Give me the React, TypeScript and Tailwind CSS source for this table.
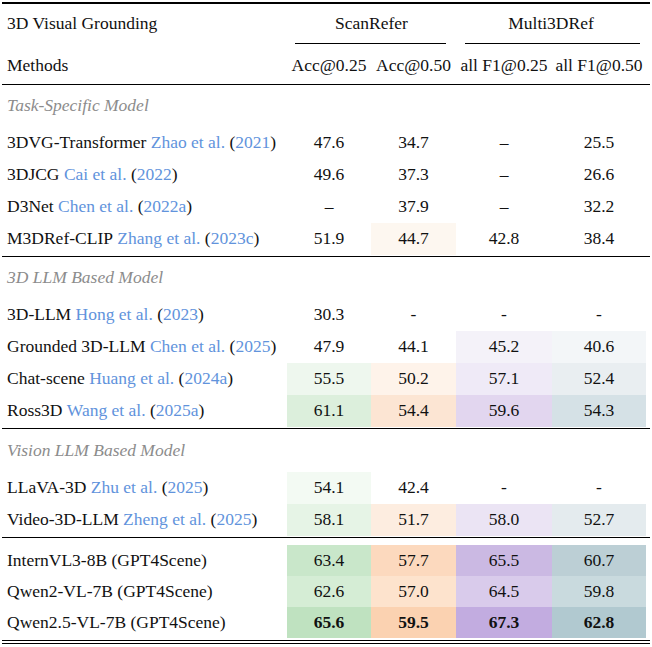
import React from "react";

type Cell = { v: string; bg?: string };
type Row = { name: string; cite?: string; year?: string; cells: Cell[]; bold?: boolean };

const s1: Row[] = [
  { name: "3DVG-Transformer", cite: "Zhao et al.", year: "2021", cells: [{ v: "47.6" }, { v: "34.7" }, { v: "–" }, { v: "25.5" }] },
  { name: "3DJCG", cite: "Cai et al.", year: "2022", cells: [{ v: "49.6" }, { v: "37.3" }, { v: "–" }, { v: "26.6" }] },
  { name: "D3Net", cite: "Chen et al.", year: "2022a", cells: [{ v: "–" }, { v: "37.9" }, { v: "–" }, { v: "32.2" }] },
  { name: "M3DRef-CLIP", cite: "Zhang et al.", year: "2023c", cells: [{ v: "51.9" }, { v: "44.7", bg: "bg-[#fdf7f0]" }, { v: "42.8" }, { v: "38.4" }] },
];

const s2: Row[] = [
  { name: "3D-LLM", cite: "Hong et al.", year: "2023", cells: [{ v: "30.3" }, { v: "-" }, { v: "-" }, { v: "-" }] },
  { name: "Grounded 3D-LLM", cite: "Chen et al.", year: "2025", cells: [{ v: "47.9" }, { v: "44.1" }, { v: "45.2", bg: "bg-[#f4f2f9]" }, { v: "40.6", bg: "bg-[#f3f6f8]" }] },
  { name: "Chat-scene", cite: "Huang et al.", year: "2024a", cells: [{ v: "55.5", bg: "bg-[#eef7ee]" }, { v: "50.2", bg: "bg-[#fef3ea]" }, { v: "57.1", bg: "bg-[#efeaf7]" }, { v: "52.4", bg: "bg-[#e9eef1]" }] },
  { name: "Ross3D", cite: "Wang et al.", year: "2025a", cells: [{ v: "61.1", bg: "bg-[#dcefdc]" }, { v: "54.4", bg: "bg-[#fce5d3]" }, { v: "59.6", bg: "bg-[#e2d6ef]" }, { v: "54.3", bg: "bg-[#d5e1e6]" }] },
];

const s3: Row[] = [
  { name: "LLaVA-3D", cite: "Zhu et al.", year: "2025", cells: [{ v: "54.1", bg: "bg-[#f3faf3]" }, { v: "42.4" }, { v: "-" }, { v: "-" }] },
  { name: "Video-3D-LLM", cite: "Zheng et al.", year: "2025", cells: [{ v: "58.1", bg: "bg-[#e6f4e6]" }, { v: "51.7", bg: "bg-[#fdede0]" }, { v: "58.0", bg: "bg-[#ebe4f4]" }, { v: "52.7", bg: "bg-[#e4ebee]" }] },
];

const s4: Row[] = [
  { name: "InternVL3-8B (GPT4Scene)", cells: [{ v: "63.4", bg: "bg-[#c9e7ca]" }, { v: "57.7", bg: "bg-[#fcd9be]" }, { v: "65.5", bg: "bg-[#cbb9e3]" }, { v: "60.7", bg: "bg-[#bccfd5]" }] },
  { name: "Qwen2-VL-7B (GPT4Scene)", cells: [{ v: "62.6", bg: "bg-[#d5edd5]" }, { v: "57.0", bg: "bg-[#fde3cd]" }, { v: "64.5", bg: "bg-[#d9cbeb]" }, { v: "59.8", bg: "bg-[#c9dade]" }] },
  { name: "Qwen2.5-VL-7B (GPT4Scene)", bold: true, cells: [{ v: "65.6", bg: "bg-[#bfe2c0]" }, { v: "59.5", bg: "bg-[#fbd2b1]" }, { v: "67.3", bg: "bg-[#c2ace0]" }, { v: "62.8", bg: "bg-[#b1c9d0]" }] },
];

const GRID = "grid grid-cols-[284px_84px_85px_96px_94px] ml-[3px]";

function DataRow({ r, h }: { r: Row; h: string }) {
  return (
    <div className={`${GRID} ${h}`}>
      <div className="flex items-center pl-[4px] whitespace-nowrap">
        <span>{r.name}</span>
        {r.cite && (
          <>
            <span>&nbsp;</span>
            <span className="text-[#6193dc]">{r.cite}</span>
            <span>&nbsp;(</span>
            <span className="text-[#6193dc]">{r.year}</span>
            <span>)</span>
          </>
        )}
      </div>
      {r.cells.map((c, i) => (
        <div key={i} className={`flex items-center justify-center ${c.bg ?? ""} ${r.bold ? "font-bold" : ""}`}>
          {c.v}
        </div>
      ))}
    </div>
  );
}

function Label({ text, h }: { text: string; h: string }) {
  return (
    <div className={`${h} flex items-center pl-[7px] italic text-[#8c8c8c]`}>{text}</div>
  );
}

const Rule = ({ cls = "h-px" }: { cls?: string }) => <div className={`mx-[2px] bg-black ${cls}`} />;

export default function App() {
  return (
    <div className="w-[652px] h-[647px] bg-white text-[#111] text-[17.5px] leading-none font-['Liberation_Serif','Times_New_Roman',serif] overflow-hidden">
      <div className="h-[2px]" />
      <Rule cls="h-[2px]" />
      {/* header row 1 */}
      <div className={`${GRID} h-[39px]`}>
        <div className="flex items-center pl-[4px]">3D Visual Grounding</div>
        <div className="col-span-2 flex items-center justify-center">ScanRefer</div>
        <div className="col-span-2 flex items-center justify-center">Multi3DRef</div>
      </div>
      <div className={`${GRID} h-px`}>
        <div />
        <div className="col-span-2 ml-[8px] mr-[10px] bg-black" />
        <div className="col-span-2 ml-[9px] mr-[6px] bg-black" />
      </div>
      <div className={`${GRID} h-[40px] pt-[4px]`}>
        <div className="flex items-center pl-[4px]">Methods</div>
        <div className="flex items-center justify-center whitespace-nowrap">Acc@0.25</div>
        <div className="flex items-center justify-center whitespace-nowrap">Acc@0.50</div>
        <div className="flex items-center justify-center whitespace-nowrap">all F1@0.25</div>
        <div className="flex items-center justify-center whitespace-nowrap">all F1@0.50</div>
      </div>
      <Rule />
      <Label text="Task-Specific Model" h="h-[42px]" />
      {s1.map((r) => (
        <DataRow key={r.name} r={r} h="h-[32px]" />
      ))}
      <div className="h-px" />
      <Rule />
      <Label text="3D LLM Based Model" h="h-[42px]" />
      {s2.map((r) => (
        <DataRow key={r.name} r={r} h="h-[32px]" />
      ))}
      <div className="h-px" />
      <Rule />
      <Label text="Vision LLM Based Model" h="h-[43px]" />
      {s3.map((r) => (
        <DataRow key={r.name} r={r} h="h-[32px]" />
      ))}
      <div className="h-px" />
      <Rule />
      <div className="h-[7px]" />
      {s4.map((r) => (
        <DataRow key={r.name} r={r} h="h-[31px]" />
      ))}
      <div className="h-[2px]" />
      <Rule />
      <div className="h-[2px]" />
      <Rule />
    </div>
  );
}
